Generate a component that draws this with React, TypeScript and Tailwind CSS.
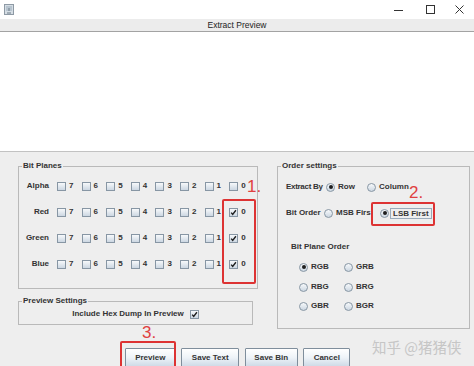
import React from "react";

function Check({ checked = false }: { checked?: boolean }) {
  return (
    <span className="w-[9px] h-[9px] shrink-0 border border-[#8796a4] bg-linear-to-b from-[#f7f9fb] to-[#ccd7e2] flex items-center justify-center">
      {checked && (
        <svg width="7" height="7" viewBox="0 0 7 7">
          <path d="M1.2 3.6 L2.7 5.4 L5.9 1.3" stroke="#1e1e1e" strokeWidth="1.4" fill="none" />
        </svg>
      )}
    </span>
  );
}

function Radio({ selected = false }: { selected?: boolean }) {
  return (
    <span className="w-[9px] h-[9px] shrink-0 rounded-full border border-[#8796a4] bg-linear-to-b from-[#f7f9fb] to-[#ccd7e2] flex items-center justify-center">
      {selected && <span className="w-[4px] h-[4px] rounded-full bg-[#1e1e1e]" />}
    </span>
  );
}

const bits = ["7", "6", "5", "4", "3", "2", "1", "0"];

function BitRow({ label, last }: { label: string; last: boolean }) {
  return (
    <div className="flex items-center h-[26px]">
      <span className="w-[30px] text-right font-bold whitespace-nowrap">{label}</span>
      <div className="flex ml-[8px]">
        {bits.map((b) => (
          <div key={b} className="w-[24.6px] flex items-center">
            <Check checked={last && b === "0"} />
            <span className="ml-[3px] font-bold">{b}</span>
          </div>
        ))}
      </div>
    </div>
  );
}

function Btn({ label, w }: { label: string; w: string }) {
  return (
    <div
      className={`${w} h-[19px] border border-[#7f8e9c] rounded-[1px] bg-linear-to-b from-[#ffffff] via-[#eef3f8] to-[#cfdbe7] flex items-center justify-center font-bold`}
    >
      {label}
    </div>
  );
}

export default function App() {
  return (
    <div className="w-[474px] h-[366px] overflow-hidden relative bg-[#eeeeee] font-['Liberation_Sans',sans-serif] text-[8px] leading-[10px] text-[#333333]">
      {/* window title bar */}
      <div className="h-[19px] bg-white flex items-center">
        <svg className="ml-[4px]" width="10" height="11" viewBox="0 0 10 11">
          <rect x="0.5" y="0.5" width="9" height="10" fill="#d5dde4" stroke="#8e9aa5" />
          <rect x="2" y="2" width="6" height="5" fill="#b7c4cf" />
          <path d="M3 9 h4 M5 4 v3" stroke="#6d7c89" strokeWidth="1" />
        </svg>
        <div className="ml-auto flex items-center pr-[10px]">
          <svg width="9" height="9" viewBox="0 0 9 9">
            <path d="M0 5.5 H9" stroke="#333" strokeWidth="1" />
          </svg>
          <svg className="ml-[23px]" width="9" height="9" viewBox="0 0 9 9">
            <rect x="0.5" y="0.5" width="8" height="8" fill="none" stroke="#333" strokeWidth="1" />
          </svg>
          <svg className="ml-[20px]" width="9" height="9" viewBox="0 0 9 9">
            <path d="M0.5 0.5 L8.5 8.5 M8.5 0.5 L0.5 8.5" stroke="#333" strokeWidth="1" />
          </svg>
        </div>
      </div>

      {/* dialog title */}
      <div className="h-[13px] bg-[#ececec] border-b border-[#a3a3a3] flex items-center justify-center text-[8.5px] text-[#222]">
        Extract Preview
      </div>

      {/* preview text area */}
      <div className="h-[120px] bg-white border-b border-[#c2c2c2]" />

      {/* settings */}
      <div className="flex flex-col">
        <div className="flex items-start mt-[9px]">
          <div className="flex flex-col ml-[18px] w-[240px]">
            <fieldset className="w-[240px] border border-[#b9b9b9] pt-[2px] pb-[11px]">
              <legend className="ml-[3px] px-[1px] font-bold leading-[10px]">Bit Planes</legend>
              <BitRow label="Alpha" last={false} />
              <BitRow label="Red" last={true} />
              <BitRow label="Green" last={true} />
              <BitRow label="Blue" last={true} />
            </fieldset>
            <fieldset className="mt-[7px] w-[235px] border border-[#b9b9b9] pt-[2px] pb-[4px]">
              <legend className="ml-[3px] px-[1px] font-bold leading-[10px]">Preview Settings</legend>
              <div className="h-[12px] flex items-center justify-center">
                <span className="font-bold">Include Hex Dump In Preview</span>
                <span className="ml-[6px]">
                  <Check checked />
                </span>
              </div>
            </fieldset>
          </div>

          <fieldset className="ml-[19px] w-[193px] border border-[#b9b9b9] pt-[10px] pb-[16px]">
            <legend className="ml-[3px] px-[1px] font-bold leading-[10px]">Order settings</legend>
            <div className="h-[12px] flex items-center ml-[8px]">
              <span className="w-[40px] font-bold whitespace-nowrap tracking-[-0.3px]">Extract By</span>
              <div className="w-[41px] flex items-center">
                <Radio selected />
                <span className="ml-[3px] font-bold">Row</span>
              </div>
              <div className="flex items-center">
                <Radio />
                <span className="ml-[3px] font-bold">Column</span>
              </div>
            </div>
            <div className="mt-[14px] h-[12px] flex items-center ml-[8px]">
              <span className="w-[38px] font-bold whitespace-nowrap">Bit Order</span>
              <div className="w-[46px] flex items-center whitespace-nowrap">
                <Radio />
                <span className="ml-[3px] font-bold">MSB Firs</span>
              </div>
              <div className="ml-[10px] flex items-center">
                <Radio selected />
                <span className="ml-[1px] px-[2px] border border-[#9aabbb] font-bold leading-[9px]">LSB First</span>
              </div>
            </div>
            <div className="mt-[23px] ml-[13px] h-[10px] font-bold">Bit Plane Order</div>
            {[
              ["RGB", "GRB", true],
              ["RBG", "BRG", false],
              ["GBR", "BGR", false],
            ].map(([a, b, sel], i) => (
              <div
                key={a as string}
                className={`${i === 0 ? "mt-[9px]" : i === 1 ? "mt-[8px]" : "mt-[7px]"} h-[12px] flex items-center ml-[21px]`}
              >
                <div className="w-[45px] flex items-center">
                  <Radio selected={sel as boolean} />
                  <span className="ml-[3px] font-bold">{a as string}</span>
                </div>
                <div className="flex items-center">
                  <Radio />
                  <span className="ml-[3px] font-bold">{b as string}</span>
                </div>
              </div>
            ))}
          </fieldset>
        </div>

        <div className="mt-[19px] flex justify-center gap-[5.5px] pl-[1px]">
          <Btn label="Preview" w="w-[51px]" />
          <Btn label="Save Text" w="w-[58px]" />
          <Btn label="Save Bin" w="w-[53px]" />
          <Btn label="Cancel" w="w-[47px]" />
        </div>
      </div>

      {/* annotations */}
      <div className="absolute left-[222px] top-[199px] w-[34px] h-[85px] border-2 border-[#dd3333] rounded-[2px]" />
      <div className="absolute left-[247px] top-[178px] text-[17px] leading-[17px] text-[#e04040]">1.</div>
      <div className="absolute left-[371px] top-[202px] w-[64px] h-[24px] border-2 border-[#dd3333] rounded-[2px]" />
      <div className="absolute left-[409px] top-[184px] text-[17px] leading-[17px] text-[#e04040]">2.</div>
      <div className="absolute left-[120px] top-[341px] w-[56px] h-[30px] border-2 border-[#dd3333] rounded-[2px]" />
      <div className="absolute left-[142px] top-[324px] text-[17px] leading-[17px] text-[#e04040]">3.</div>
      <div className="absolute left-[372px] top-[338px] text-[14.5px] leading-[18px] text-[#c6c6c6] font-['Noto_Sans_CJK_SC',sans-serif]">
        知乎 @猪猪侠
      </div>
    </div>
  );
}
